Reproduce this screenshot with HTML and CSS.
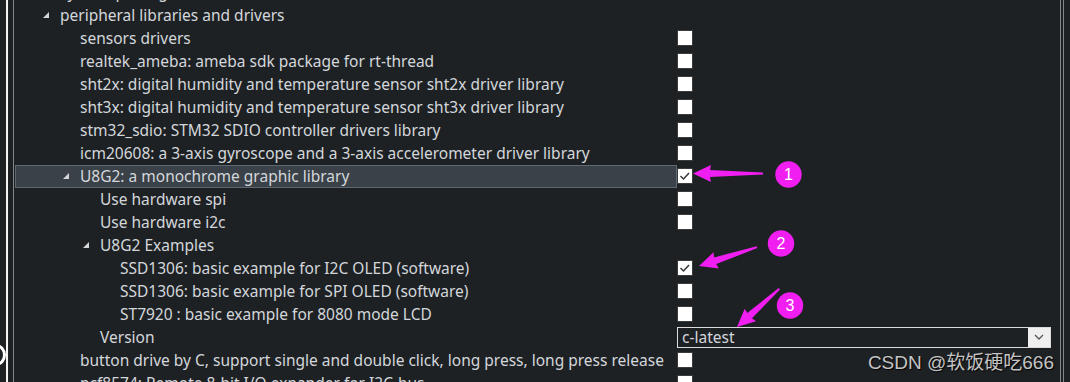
FILE: index.html
```html
<!DOCTYPE html>
<html>
  <head>
    <title>RT-Thread Settings - packages</title>
    <link rel="stylesheet" href="styles.css">
  </head>
  <body>
    <div class="window">
      <div class="rail">
        <div class="tree">
          <div class="rows">
            <div class="row"><div class="name l1"><i class="exp"></i>system packages</div></div>
            <div class="row"><div class="name l1"><i class="exp open"></i>peripheral libraries and drivers</div></div>
            <div class="row"><div class="name l2"><i class="exp"></i>sensors drivers</div><div class="cell"><span class="box"></span></div></div>
            <div class="row"><div class="name l2"><i class="exp"></i>realtek_ameba: ameba sdk package for rt-thread</div><div class="cell"><span class="box"></span></div></div>
            <div class="row"><div class="name l2"><i class="exp"></i>sht2x: digital humidity and temperature sensor sht2x driver library</div><div class="cell"><span class="box"></span></div></div>
            <div class="row"><div class="name l2"><i class="exp"></i>sht3x: digital humidity and temperature sensor sht3x driver library</div><div class="cell"><span class="box"></span></div></div>
            <div class="row"><div class="name l2"><i class="exp"></i>stm32_sdio: STM32 SDIO controller drivers library</div><div class="cell"><span class="box"></span></div></div>
            <div class="row"><div class="name l2"><i class="exp"></i>icm20608: a 3-axis gyroscope and a 3-axis accelerometer driver library</div><div class="cell"><span class="box"></span></div></div>
            <div class="row selected"><div class="name l2"><i class="exp open"></i>U8G2: a monochrome graphic library</div><div class="cell"><span class="box checked"><svg width="14" height="14" viewBox="0 0 14 14"><polyline points="2.5,7 5.5,10 11,4" fill="none" stroke="#333" stroke-width="1.4"/></svg></span></div></div>
            <div class="row"><div class="name l3"><i class="exp"></i>Use hardware spi</div><div class="cell"><span class="box"></span></div></div>
            <div class="row"><div class="name l3"><i class="exp"></i>Use hardware i2c</div><div class="cell"><span class="box"></span></div></div>
            <div class="row"><div class="name l3"><i class="exp open"></i>U8G2 Examples</div></div>
            <div class="row"><div class="name l4"><i class="exp"></i>SSD1306: basic example for I2C OLED (software)</div><div class="cell"><span class="box checked"><svg width="14" height="14" viewBox="0 0 14 14"><polyline points="2.5,7 5.5,10 11,4" fill="none" stroke="#333" stroke-width="1.4"/></svg></span></div></div>
            <div class="row"><div class="name l4"><i class="exp"></i>SSD1306: basic example for SPI OLED (software)</div><div class="cell"><span class="box"></span></div></div>
            <div class="row"><div class="name l4"><i class="exp"></i>ST7920 : basic example for 8080 mode LCD</div><div class="cell"><span class="box"></span></div></div>
            <div class="row"><div class="name l3"><i class="exp"></i>Version</div>
              <div class="cell">
                <div class="select">
                  <span class="value">c-latest</span>
                  <span class="drop"><svg width="10" height="6" viewBox="0 0 10 6"><polyline points="1,1 5,5 9,1" fill="none" stroke="#555" stroke-width="1.3"/></svg></span>
                </div>
              </div>
            </div>
            <div class="row"><div class="name l2"><i class="exp"></i>button drive by C, support single and double click, long press, long press release</div><div class="cell"><span class="box"></span></div></div>
            <div class="row"><div class="name l2"><i class="exp"></i>pcf8574: Remote 8-bit I/O expander for I2C-bus</div><div class="cell"><span class="box"></span></div></div>
          </div>
        </div>
      </div>
    </div>

    <!-- bit of a control cut off at the left edge -->
    <div class="cutoff"></div>

    <!-- screenshot annotations -->
    <svg class="marks" width="1070" height="382" viewBox="0 0 1070 382">
      <g fill="#f01ef0">
        <g transform="translate(693 173.5)">
          <polygon points="0,0 18,-8.5 17,-3.5 70,-1 70,1 17,3.5 18,8.5"/>
        </g>
        <g transform="translate(699 266) rotate(-18)">
          <polygon points="0,0 18,-8.5 17,-3.5 61,-1 61,1 17,3.5 18,8.5"/>
        </g>
        <g transform="translate(737 327) rotate(-42)">
          <polygon points="0,0 18,-8.5 17,-3.5 57,-1 57,1 17,3.5 18,8.5"/>
        </g>
        <circle cx="788.5" cy="174.5" r="13.2"/>
        <circle cx="781" cy="243.5" r="13.2"/>
        <circle cx="790" cy="305.5" r="13.2"/>
      </g>
      <g class="num" fill="#fff" text-anchor="middle">
        <text x="788.5" y="180">1</text>
        <text x="781" y="249">2</text>
        <text x="790" y="311">3</text>
      </g>
    </svg>

    <div class="watermark">CSDN @软饭硬吃666</div>
  </body>
</html>
```

FILE: styles.css
```css
html,
body {
  margin: 0;
  background-color: #1e2124;
}

body {
  width: 1070px;
  height: 382px;
  overflow: hidden;
  position: relative;
  font-family: 'Noto Sans', 'Liberation Sans', sans-serif;
  font-size: 15.5px;
  color: #d3d7db;
}

.window {
  display: flex;
  height: 382px;
  padding-left: 6px;
}

.rail {
  display: flex;
  border-left: 2px solid #f4f4f4;
  border-right: 1px solid #7f868c;
  padding: 0 2px 0 5px;
}

.tree {
  width: 1046px;
  height: 382px;
  overflow: hidden;
  border-left: 1px solid #7f868c;
  border-right: 1px solid #7f868c;
}

.rows {
  margin-top: -19px;
}

.row {
  display: flex;
  height: 23px;
  padding-left: 1px;
}

.name {
  width: 662px;
  height: 23px;
  box-sizing: border-box;
  display: flex;
  align-items: center;
  padding-bottom: 2px;
  white-space: nowrap;
}

.l1 { padding-left: 25px; }
.l2 { padding-left: 45px; }
.l3 { padding-left: 65px; }
.l4 { padding-left: 85px; }

.selected .name {
  background-color: #3a4148;
  border: 1px solid #5f6870;
  padding-left: 44px;
}

/* expander slot, the triangle only shows when open */
.exp {
  width: 20px;
  height: 21px;
  flex: none;
  position: relative;
}

.exp.open::before {
  content: '';
  position: absolute;
  left: 3px;
  top: 8px;
  width: 0;
  height: 0;
  border-left: 6px solid transparent;
  border-bottom: 6px solid #d6d6d6;
}

.cell {
  display: flex;
  align-items: center;
  height: 22px;
}

.box {
  display: block;
  width: 14px;
  height: 14px;
  background-color: #ffffff;
  border: 1px solid #3b3b3b;
}

.box svg {
  display: block;
}

.select {
  display: flex;
  width: 374px;
  height: 21px;
  box-sizing: border-box;
  border: 1px solid #dcdcdc;
  background-color: #1e2124;
}

.select .value {
  padding-left: 4px;
  line-height: 18px;
  color: #d3d7db;
}

.select .drop {
  margin-left: auto;
  width: 22px;
  background-color: #efefef;
  display: flex;
  align-items: center;
  justify-content: center;
}

.cutoff {
  position: absolute;
  left: -14px;
  top: 344px;
  width: 14px;
  height: 16px;
  border: 3px solid #ffffff;
  border-radius: 50%;
}

.marks {
  position: absolute;
  left: 0;
  top: 0;
  pointer-events: none;
}

.num text {
  font-family: 'Liberation Sans', sans-serif;
  font-size: 16px;
}

.watermark {
  position: absolute;
  right: 16px;
  top: 347px;
  font-family: 'Liberation Sans', 'Noto Sans CJK SC', sans-serif;
  font-size: 19px;
  color: #c4c4c4;
  text-shadow: 1px 1px 1px #000;
  white-space: nowrap;
}
```
